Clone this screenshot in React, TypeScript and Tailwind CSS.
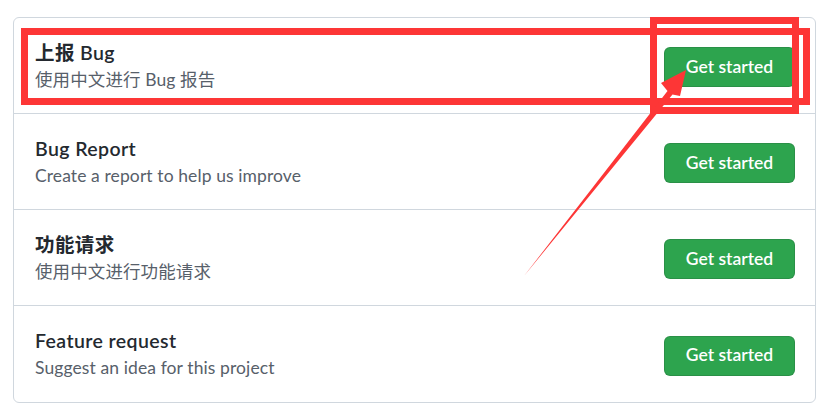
import React from "react";

const rows = [
  { title: "上报 Bug", desc: "使用中文进行 Bug 报告" },
  { title: "Bug Report", desc: "Create a report to help us improve" },
  { title: "功能请求", desc: "使用中文进行功能请求" },
  { title: "Feature request", desc: "Suggest an idea for this project" },
];

export default function App() {
  const font = {
    fontFamily: 'Lato, "Noto Sans CJK SC", sans-serif',
  };
  return (
    <div className="relative w-[828px] h-[419px] bg-white" style={font}>
      <div className="pt-[17px] pl-[13px] w-[816px]">
        <div className="border border-[#d0d7de] rounded-[6px]">
          {rows.map((r, i) => (
            <div
              key={i}
              className={`flex items-center justify-between h-[96px] pl-[21px] pr-[20px] ${
                i < 3 ? "border-b border-[#d0d7de]" : ""
              }`}
            >
              <div className="flex flex-col">
                <div className="text-[19.5px] leading-[28px] font-semibold tracking-[0.4px] text-[#24292f]">
                  {r.title}
                </div>
                <div className="text-[17.5px] leading-[26px] tracking-[0.1px] text-[#57606a]">
                  {r.desc}
                </div>
              </div>
              <button className="w-[131px] h-[40px] rounded-[6px] bg-[#2da44e] border border-[#1b1f2426] text-white text-[17.5px] font-semibold mt-[3px]">
                Get started
              </button>
            </div>
          ))}
        </div>
      </div>
      <svg
        className="absolute left-0 top-0 pointer-events-none"
        width="828"
        height="419"
        viewBox="0 0 828 419"
      >
        <rect x="24.5" y="31.5" width="782" height="70" fill="none" stroke="#fd3636" strokeWidth="7" />
        <rect x="653.5" y="20.5" width="142" height="90" fill="none" stroke="#fd3636" strokeWidth="7" />
        <polygon
          points="524,276 667.5,91 661,83 686,70 680,96 672.5,94.5"
          fill="#fd3636"
        />
      </svg>
    </div>
  );
}
